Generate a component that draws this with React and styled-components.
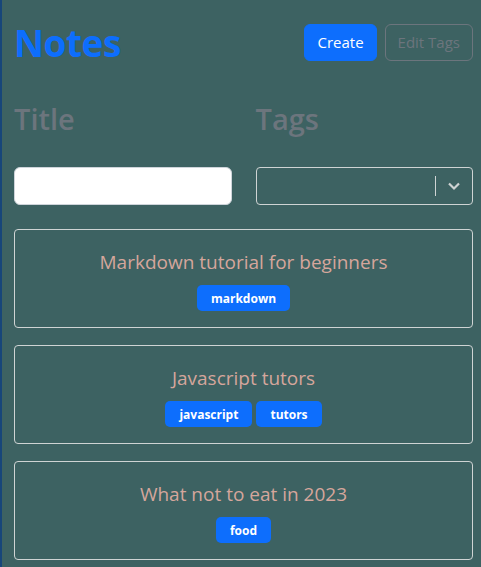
import React from "react";
import styled, { createGlobalStyle } from "styled-components";

const GlobalStyle = createGlobalStyle`
  * { box-sizing: border-box; }
  html, body {
    margin: 0;
    padding: 0;
    background: #3d6262;
    font-family: "Open Sans", "Noto Sans", sans-serif;
  }
  body {
    border-left: 2px solid #17467a;
    min-height: 567px;
  }
`;

const Page = styled.div`
  padding: 16px 8px 0 12px;
  display: flex;
  flex-direction: column;
`;

const Header = styled.div`
  display: flex;
  align-items: center;
  justify-content: space-between;
  height: 52px;
  margin-bottom: 33px;
`;

const Heading = styled.h1`
  margin: 0;
  font-size: 37px;
  font-weight: 700;
  letter-spacing: -0.5px;
  color: #0d6efd;
`;

const Actions = styled.div`
  display: flex;
  gap: 8px;
`;

const Button = styled.button`
  height: 37px;
  padding: 0 12px;
  font-family: inherit;
  font-size: 15px;
  border-radius: 6px;
  border: 1px solid ${(p) => (p.$outline ? "#6c757d" : "#0d6efd")};
  background: ${(p) => (p.$outline ? "transparent" : "#0d6efd")};
  color: ${(p) => (p.$outline ? "#6c757d" : "#fff")};
`;

const Form = styled.div`
  display: grid;
  grid-template-columns: minmax(0, 1fr) minmax(0, 1fr);
  column-gap: 24px;
  margin-bottom: 24px;
`;

const Field = styled.div`
  display: flex;
  flex-direction: column;
  gap: 30px;
`;

const Label = styled.label`
  font-size: 29px;
  font-weight: 600;
  line-height: 36px;
  color: #6c757d;
`;

const Input = styled.input`
  width: 100%;
  height: 38px;
  border: 1px solid #ced4da;
  border-radius: 6px;
  background: #fff;
  font-family: inherit;
  font-size: 16px;
  padding: 0 12px;
`;

const Select = styled.div`
  height: 38px;
  border: 1px solid #cfd4d4;
  border-radius: 4px;
  display: flex;
  align-items: center;
  justify-content: flex-end;
`;

const Divider = styled.span`
  width: 1px;
  height: 20px;
  background: #cfd4d4;
`;

const Chevron = styled.span`
  width: 36px;
  display: flex;
  justify-content: center;
  color: #cfd4d4;
`;

const List = styled.div`
  display: flex;
  flex-direction: column;
  gap: 17px;
`;

const Card = styled.div`
  border: 1px solid #cfd4d4;
  border-radius: 4px;
  padding: 20px 16px 16px;
  display: flex;
  flex-direction: column;
  align-items: center;
  gap: 11px;
`;

const CardTitle = styled.div`
  font-size: 19px;
  line-height: 24px;
  color: #d5a69c;
`;

const Tags = styled.div`
  display: flex;
  gap: 4px;
`;

const Tag = styled.span`
  height: 26px;
  padding: 0 14px;
  display: flex;
  align-items: center;
  border-radius: 5px;
  background: #0d6efd;
  color: #fff;
  font-size: 12px;
  font-weight: 700;
`;

const notes = [
  { title: "Markdown tutorial for beginners", tags: ["markdown"] },
  { title: "Javascript tutors", tags: ["javascript", "tutors"] },
  { title: "What not to eat in 2023", tags: ["food"] },
];

export default function App() {
  return (
    <>
      <GlobalStyle />
      <Page>
        <Header>
          <Heading>Notes</Heading>
          <Actions>
            <Button>Create</Button>
            <Button $outline>Edit Tags</Button>
          </Actions>
        </Header>
        <Form>
          <Field>
            <Label>Title</Label>
            <Input />
          </Field>
          <Field>
            <Label>Tags</Label>
            <Select>
              <Divider />
              <Chevron>
                <svg width="14" height="10" viewBox="0 0 14 10">
                  <path d="M2 2.5 L7 7.5 L12 2.5" fill="none" stroke="currentColor" strokeWidth="2.2" />
                </svg>
              </Chevron>
            </Select>
          </Field>
        </Form>
        <List>
          {notes.map((n) => (
            <Card key={n.title}>
              <CardTitle>{n.title}</CardTitle>
              <Tags>
                {n.tags.map((t) => (
                  <Tag key={t}>{t}</Tag>
                ))}
              </Tags>
            </Card>
          ))}
        </List>
      </Page>
    </>
  );
}
